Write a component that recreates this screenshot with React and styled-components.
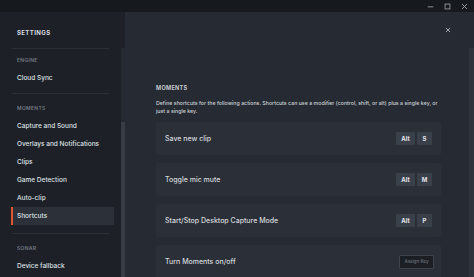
import React from "react";
import styled, { createGlobalStyle } from "styled-components";

const GlobalStyle = createGlobalStyle`
  html, body {
    margin: 0;
    padding: 0;
    background: #262b33;
    font-family: "Inter", "Noto Sans", sans-serif;
    -webkit-font-smoothing: antialiased;
  }
  * { box-sizing: border-box; }
`;

const Window = styled.div`
  width: 474px;
  height: 277px;
  display: flex;
  flex-direction: column;
  overflow: hidden;
  background: #262b33;
`;

const TitleBar = styled.div`
  height: 12px;
  flex: none;
  background: #16191d;
  display: flex;
  justify-content: flex-end;
  align-items: center;
  gap: 10px;
  padding-right: 6px;
`;

const WinButton = styled.div`
  width: 7px;
  height: 7px;
  display: flex;
  align-items: center;
  justify-content: center;
  color: #9aa0a8;
`;

const Body = styled.div`
  flex: 1;
  display: flex;
  min-height: 0;
`;

const Sidebar = styled.aside`
  width: 125px;
  flex: none;
  background: #1d2127;
  display: flex;
  flex-direction: column;
`;

const SideHeader = styled.div`
  height: 36px;
  padding: 17px 0 0 17px;
  font-size: 6px;
  line-height: 8px;
  font-weight: 700;
  letter-spacing: 0.4px;
  color: #d9dce0;
`;

const SideScroll = styled.div`
  flex: 1;
  display: flex;
  min-height: 0;
`;

const NavList = styled.nav`
  flex: 1;
  display: flex;
  flex-direction: column;
  overflow: hidden;
`;

const Track = styled.div`
  width: ${(p) => p.$w}px;
  flex: none;
  background: ${(p) => p.$bg || "#252930"};
  display: flex;
  flex-direction: column;
`;

const Thumb = styled.div`
  margin-top: ${(p) => p.$top}px;
  flex: 1;
  background: ${(p) => p.$bg || "#383d45"};
`;

const Divider = styled.div`
  height: 1px;
  flex: none;
  margin: ${(p) => p.$top || 0}px 12px 0;
  background: #2b3037;
`;

const SectionLabel = styled.div`
  height: ${(p) => p.$h}px;
  flex: none;
  padding: ${(p) => p.$pad}px 0 0 17px;
  font-size: 5px;
  line-height: 8px;
  font-weight: 600;
  letter-spacing: 0.3px;
  color: #747a83;
  text-transform: uppercase;
`;

const NavItem = styled.div`
  height: 18px;
  flex: none;
  margin: 0 7px 0 11px;
  padding-left: 4px;
  display: flex;
  align-items: center;
  font-size: 6.5px;
  font-weight: 500;
  color: #dfe2e6;
  background: ${(p) => (p.$active ? "#2c3139" : "transparent")};
  border-left: 2px solid ${(p) => (p.$active ? "#dc552b" : "transparent")};
`;

const Content = styled.main`
  flex: 1;
  display: flex;
  flex-direction: column;
  min-width: 0;
`;

const ContentHeader = styled.div`
  height: 36px;
  flex: none;
  display: flex;
  justify-content: flex-end;
  align-items: center;
  padding-right: 23px;
  color: #b9bec5;
`;

const ContentScroll = styled.div`
  flex: 1;
  display: flex;
  min-height: 0;
`;

const Panel = styled.section`
  flex: 1;
  padding: 36px 28px 0 31px;
  display: flex;
  flex-direction: column;
  overflow: hidden;
`;

const Heading = styled.h2`
  margin: 0;
  font-size: 5.5px;
  line-height: 8px;
  font-weight: 700;
  letter-spacing: 0.3px;
  color: #c4c8ce;
`;

const Description = styled.p`
  margin: 7px 0 7px;
  font-size: 5.25px;
  line-height: 8px;
  font-weight: 500;
  color: #cdd1d6;
`;

const Card = styled.div`
  height: 33px;
  flex: none;
  margin-bottom: 8px;
  padding: 0 9px;
  display: flex;
  align-items: center;
  justify-content: space-between;
  background: #2b3038;
  border-radius: 2px;
`;

const CardLabel = styled.span`
  font-size: 7px;
  font-weight: 500;
  color: #d6d9de;
`;

const Keys = styled.div`
  display: flex;
  gap: 2px;
`;

const Key = styled.span`
  height: 13px;
  min-width: ${(p) => (p.$wide ? 19 : 15)}px;
  padding: 0 3px;
  display: flex;
  align-items: center;
  justify-content: center;
  background: #3a4049;
  border-radius: 1px;
  font-size: 6px;
  font-weight: 700;
  color: #e2e5e9;
`;

const AssignButton = styled.button`
  width: 35px;
  height: 14px;
  margin-right: -2px;
  padding: 0;
  background: #1b1e23;
  border: 1px solid #3f444c;
  border-radius: 1px;
  font-family: inherit;
  font-size: 4.6px;
  color: #7b818a;
`;

const shortcuts = [
  { label: "Save new clip", keys: ["Alt", "S"] },
  { label: "Toggle mic mute", keys: ["Alt", "M"] },
  { label: "Start/Stop Desktop Capture Mode", keys: ["Alt", "P"] },
  { label: "Turn Moments on/off", keys: null },
];

const momentsItems = [
  "Capture and Sound",
  "Overlays and Notifications",
  "Clips",
  "Game Detection",
  "Auto-clip",
  "Shortcuts",
];

const Cross = ({ size = 6, color = "currentColor" }) => (
  <svg width={size} height={size} viewBox="0 0 10 10">
    <path d="M1.5 1.5 L8.5 8.5 M8.5 1.5 L1.5 8.5" stroke={color} strokeWidth="1.4" />
  </svg>
);

const App = () => {
  return (
    <Window>
      <GlobalStyle />
      <TitleBar>
        <WinButton>
          <svg width="7" height="7" viewBox="0 0 10 10">
            <path d="M1 5.5 H9" stroke="currentColor" strokeWidth="1.3" />
          </svg>
        </WinButton>
        <WinButton>
          <svg width="7" height="7" viewBox="0 0 10 10">
            <rect x="1.5" y="1.5" width="7" height="7" fill="none" stroke="currentColor" strokeWidth="1.2" />
          </svg>
        </WinButton>
        <WinButton>
          <Cross size={7} />
        </WinButton>
      </TitleBar>
      <Body>
        <Sidebar>
          <SideHeader>SETTINGS</SideHeader>
          <SideScroll>
            <NavList>
              <Divider />
              <SectionLabel $h={20} $pad={7}>Engine</SectionLabel>
              <NavItem>Cloud Sync</NavItem>
              <Divider $top={6} />
              <SectionLabel $h={23} $pad={10}>Moments</SectionLabel>
              {momentsItems.map((item) => (
                <NavItem key={item} $active={item === "Shortcuts"}>
                  {item}
                </NavItem>
              ))}
              <Divider $top={8} />
              <SectionLabel $h={23} $pad={10}>Sonar</SectionLabel>
              <NavItem>Device fallback</NavItem>
            </NavList>
            <Track $w={4}>
              <Thumb $top={74} />
            </Track>
          </SideScroll>
        </Sidebar>
        <Content>
          <ContentHeader>
            <Cross size={6} />
          </ContentHeader>
          <ContentScroll>
            <Panel>
              <Heading>MOMENTS</Heading>
              <Description>
                Define shortcuts for the following actions. Shortcuts can use a modifier
                (control, shift, or alt) plus a single key, or just a single key.
              </Description>
              {shortcuts.map((s) => (
                <Card key={s.label}>
                  <CardLabel>{s.label}</CardLabel>
                  {s.keys ? (
                    <Keys>
                      {s.keys.map((k, i) => (
                        <Key key={k} $wide={i === 0}>
                          {k}
                        </Key>
                      ))}
                    </Keys>
                  ) : (
                    <AssignButton>Assign Key</AssignButton>
                  )}
                </Card>
              ))}
            </Panel>
            <Track $w={5} $bg="#2a2f37">
              <Thumb $top={0} $bg="#30353d" />
            </Track>
          </ContentScroll>
        </Content>
      </Body>
    </Window>
  );
};

export default App;
